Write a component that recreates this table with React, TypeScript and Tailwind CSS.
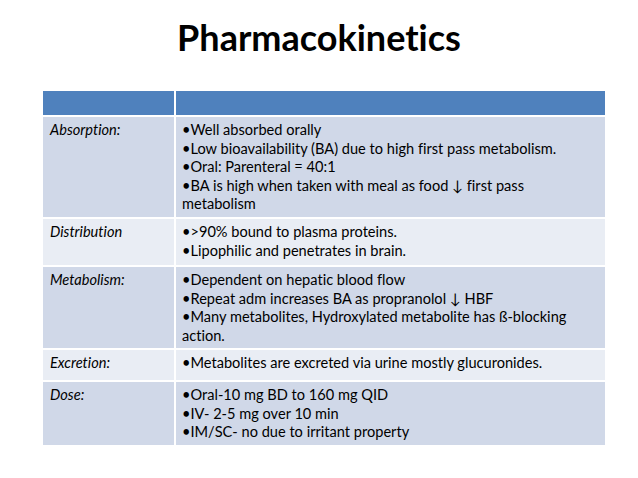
import React from 'react';

const rows: { label: string; items: string[]; h: string; shade: string }[] = [
  {
    label: 'Absorption:',
    items: [
      '•Well absorbed orally',
      '•Low bioavailability (BA) due to high first pass metabolism.',
      '•Oral: Parenteral = 40:1',
      '•BA is high when taken with meal as food ↓ first pass metabolism',
    ],
    h: 'h-[100px]',
    shade: 'bg-[#d0d8e8]',
  },
  {
    label: 'Distribution',
    items: ['•>90% bound to plasma proteins.', '•Lipophilic and penetrates in brain.'],
    h: 'h-[46px]',
    shade: 'bg-[#e9edf4]',
  },
  {
    label: 'Metabolism:',
    items: [
      '•Dependent on hepatic blood flow',
      '•Repeat adm increases BA as propranolol ↓ HBF',
      '•Many metabolites, Hydroxylated metabolite has ß-blocking action.',
    ],
    h: 'h-[81px]',
    shade: 'bg-[#d0d8e8]',
  },
  {
    label: 'Excretion:',
    items: ['•Metabolites are excreted via urine mostly glucuronides.'],
    h: 'h-[30px]',
    shade: 'bg-[#e9edf4]',
  },
  {
    label: 'Dose:',
    items: ['•Oral-10 mg BD to 160 mg QID', '•IV- 2-5 mg over 10 min', '•IM/SC- no due to irritant property'],
    h: 'h-[63px]',
    shade: 'bg-[#d0d8e8]',
  },
];

const App: React.FC = () => {
  return (
    <div className="w-[638px] h-[478px] bg-white font-['Lato','Liberation_Sans',sans-serif] text-black [font-variant-ligatures:none]">
      <h1 className="pt-[15px] h-[91px] text-center text-[36px] leading-[44px] font-bold">
        Pharmacokinetics
      </h1>

      <div className="ml-[43px] w-[562px] flex flex-col gap-[2px]">
        <div className="grid grid-cols-[131px_1fr] gap-[2px] h-[24px]">
          <div className="bg-[#4f81bd]" />
          <div className="bg-[#4f81bd]" />
        </div>

        {rows.map((r) => (
          <div key={r.label} className={`grid grid-cols-[131px_1fr] gap-[2px] ${r.h}`}>
            <div className={`${r.shade} px-[7px] pt-[4px] italic text-[14.6px] leading-[18.5px]`}>{r.label}</div>
            <div className={`${r.shade} pl-[6px] pr-[26px] pt-[4px] text-[14.6px] leading-[18.5px]`}>
              {r.items.map((t) => (
                <div key={t}>{t}</div>
              ))}
            </div>
          </div>
        ))}
      </div>
    </div>
  );
};

export default App;
